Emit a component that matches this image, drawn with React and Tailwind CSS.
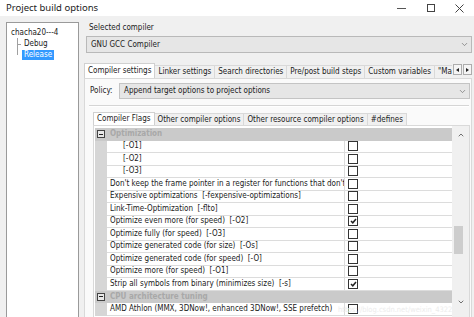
import React from 'react';
import { ChevronDown, ChevronUp } from 'lucide-react';

const rows = [
  { head: true, label: 'Optimization' },
  { label: '[-O1]', indent: true },
  { label: '[-O2]', indent: true },
  { label: '[-O3]', indent: true },
  { label: "Don't keep the frame pointer in a register for functions that don't need one  [-fomit-frame-pointer]" },
  { label: 'Expensive optimizations  [-fexpensive-optimizations]' },
  { label: 'Link-Time-Optimization  [-flto]' },
  { label: 'Optimize even more (for speed)  [-O2]', checked: true },
  { label: 'Optimize fully (for speed)  [-O3]' },
  { label: 'Optimize generated code (for size)  [-Os]' },
  { label: 'Optimize generated code (for speed)  [-O]' },
  { label: 'Optimize more (for speed)  [-O1]' },
  { label: 'Strip all symbols from binary (minimizes size)  [-s]', checked: true },
  { head: true, label: 'CPU architecture tuning' },
  { label: 'AMD Athlon (MMX, 3DNow!, enhanced 3DNow!, SSE prefetch)' },
];

const outerTabs = ['Compiler settings', 'Linker settings', 'Search directories', 'Pre/post build steps', 'Custom variables', '"Make" commands'];
const innerTabs = ['Compiler Flags', 'Other compiler options', 'Other resource compiler options', '#defines'];

const Checkbox = ({ checked }) => (
  <div className="w-[10px] h-[10px] border border-[#333] bg-white flex items-center justify-center">
    {checked && (
      <svg width="7" height="6" viewBox="0 0 7 6">
        <path d="M1 3 L2.8 4.8 L6 1" stroke="#222" strokeWidth="1.5" fill="none" />
      </svg>
    )}
  </div>
);

const Collapse = () => (
  <div className="w-[8px] h-[8px] border border-[#444] bg-[#e8e8e8] flex items-center justify-center">
    <div className="w-[4px] h-[1px] bg-[#222]" />
  </div>
);

export default function App() {
  return (
    <div
      className="w-[474px] h-[317px] overflow-hidden bg-[#f0f0f0] text-[#1a1a1a] relative flex flex-col"
      style={{ fontFamily: '"DejaVu Sans Condensed", "DejaVu Sans", sans-serif' }}
    >
      {/* title bar */}
      <div className="h-[16px] bg-white flex items-center pl-[6px] shrink-0">
        <span className="text-[9.5px] text-[#222]" style={{ fontFamily: '"Noto Sans", sans-serif' }}>Project build options</span>
        <div className="ml-auto flex items-center h-full">
          <div className="w-[29px] flex justify-center"><div className="w-[9px] h-[1px] bg-[#555]" /></div>
          <div className="w-[29px] flex justify-center"><div className="w-[8px] h-[8px] border border-[#444]" /></div>
          <div className="w-[29px] flex justify-center">
            <svg width="9" height="9" viewBox="0 0 9 9"><path d="M0.5 0.5 L8.5 8.5 M8.5 0.5 L0.5 8.5" stroke="#444" strokeWidth="1" /></svg>
          </div>
        </div>
      </div>

      <div className="flex flex-1 pt-[6px] pl-[6px] text-[8px] leading-none">
        {/* tree */}
        <div className="w-[73px] h-[320px] bg-white border border-[#9a9a9a] pt-[4px] pl-[4px] shrink-0">
          <div className="h-[11px] flex items-center">chacha20---4</div>
          <div className="flex">
            <div className="w-[4px] ml-[6px] flex flex-col">
              <div className="h-[6px] border-l border-[#a0a0a0]" />
              <div className="h-[11px] border-l border-t border-[#a0a0a0]" />
            </div>
            <div className="flex flex-col ml-[1px]">
              <div className="h-[11px] flex items-center pl-[2px]">Debug</div>
              <div className="h-[11px] flex items-center"><span className="bg-[#3399ff] text-white px-[2px] py-[1px]">Release</span></div>
            </div>
          </div>
        </div>

        {/* right side */}
        <div className="flex-1 flex flex-col pl-[7px] pr-[2px] min-w-0">
          <div className="pl-[3px] h-[12px] flex items-center">Selected compiler</div>
          <div className="mt-[2px] h-[17px] bg-[#e6e6e6] border border-[#b9b9b9] flex items-center pl-[4px] pr-[2px]">
            <span>GNU GCC Compiler</span>
            <ChevronDown className="ml-auto w-[9px] h-[9px] text-[#777]" strokeWidth={2} />
          </div>

          {/* outer tabs */}
          <div className="mt-[10px] flex items-end h-[15px] -ml-[2px] relative overflow-hidden">
            {outerTabs.map((t, i) => (
              <div
                key={t}
                className={
                  i === 0
                    ? 'h-[15px] px-[3px] flex items-center bg-white border border-b-0 border-[#d0d0d0] whitespace-nowrap shrink-0'
                    : 'h-[13px] px-[3px] flex items-center bg-[#f0f0f0] border border-l-0 border-b-0 border-[#d9d9d9] whitespace-nowrap shrink-0'
                }
              >
                {t}
              </div>
            ))}
            <div className="absolute right-0 top-[1px] flex gap-[1px] bg-[#f0f0f0] pl-[1px]">
              <div className="w-[9px] h-[11px] border border-[#adadad] bg-[#f5f5f5] flex items-center justify-center">
                <div className="w-0 h-0 border-y-[2px] border-y-transparent border-r-[3px] border-r-[#222]" />
              </div>
              <div className="w-[9px] h-[11px] border border-[#adadad] bg-[#f5f5f5] flex items-center justify-center">
                <div className="w-0 h-0 border-y-[2px] border-y-transparent border-l-[3px] border-l-[#222]" />
              </div>
            </div>
          </div>

          {/* outer tab panel */}
          <div className="flex-1 -ml-[2px] bg-[#fafafa] border border-[#d9d9d9] flex flex-col pl-[4px] pr-[1px]">
            <div className="flex items-center mt-[4px] h-[16px]">
              <span className="pl-[1px] w-[30px]">Policy:</span>
              <div className="flex-1 h-[16px] bg-[#e6e6e6] border border-[#c4c4c4] flex items-center pl-[4px] pr-[2px]">
                <span>Append target options to project options</span>
                <ChevronDown className="ml-auto w-[9px] h-[9px] text-[#777]" strokeWidth={2} />
              </div>
            </div>
            <div className="mt-[6px] h-[2px] border-t border-[#d5d5d5] border-b border-b-white mr-[1px]" />

            {/* inner tabs */}
            <div className="mt-[5px] flex items-end h-[13px] pl-[4px]">
              {innerTabs.map((t, i) => (
                <div
                  key={t}
                  className={
                    i === 0
                      ? 'h-[13px] px-[3px] flex items-center bg-white border border-b-0 border-[#d0d0d0] whitespace-nowrap'
                      : 'h-[12px] px-[3px] flex items-center bg-[#f0f0f0] border border-l-0 border-b-0 border-[#d9d9d9] whitespace-nowrap'
                  }
                >
                  {t}
                </div>
              ))}
            </div>

            {/* inner panel */}
            <div className="flex-1 ml-[4px] bg-white border border-[#d9d9d9] pt-[2px] pl-[1px] flex">
              <div className="flex-1 min-w-0 flex flex-col">
                {rows.map((r, i) =>
                  r.head ? (
                    <div key={i} className="h-[12.5px] shrink-0 bg-[#cacaca] flex items-center">
                      <div className="w-[12px] flex justify-center"><Collapse /></div>
                      <span className="pl-[3px] font-bold text-[#a8a8a8]">{r.label}</span>
                    </div>
                  ) : (
                    <div key={i} className="h-[12.5px] shrink-0 flex">
                      <div className="w-[12px] bg-[#d6d6d6] shrink-0" />
                      <div className={`flex-1 min-w-0 border-b border-[#dcdcdc] flex items-center overflow-hidden whitespace-pre ${r.indent ? 'pl-[16px]' : 'pl-[3px]'}`}>
                        {r.label}
                      </div>
                      <div className="w-[108px] shrink-0 border-l border-b border-[#dcdcdc] flex items-center pl-[3px]">
                        <Checkbox checked={r.checked} />
                      </div>
                    </div>
                  )
                )}
              </div>
              {/* scrollbar */}
              <div className="w-[17px] shrink-0 bg-[#f0f0f0] flex flex-col items-center -mt-[2px]">
                <ChevronUp className="mt-[5px] w-[8px] h-[8px] text-[#555]" strokeWidth={2.5} />
                <div className="mt-[87px] w-[9px] h-[28px] bg-[#cdcdcd] -ml-[4px]" />
                <ChevronDown className="mt-[44px] w-[8px] h-[8px] text-[#555]" strokeWidth={2.5} />
              </div>
            </div>
          </div>
        </div>
      </div>

      <div className="absolute left-[338px] top-[304px] text-[7.5px] text-[#ececec] whitespace-nowrap pointer-events-none">
        https://blog.csdn.net/weixin_4322
      </div>
    </div>
  );
}
